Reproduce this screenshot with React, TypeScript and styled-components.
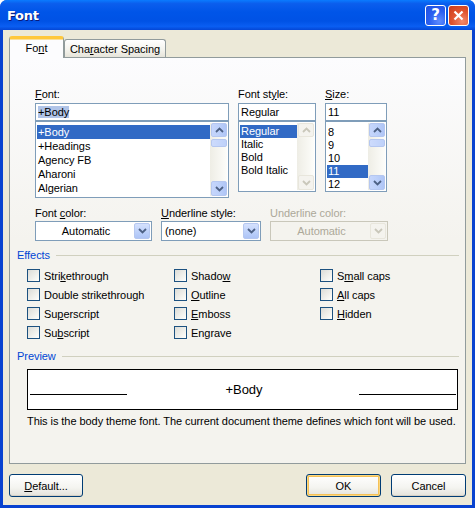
import React, { FC, ReactNode } from "react";
import styled, { createGlobalStyle, css } from "styled-components";

const GlobalStyle = createGlobalStyle`
  html, body { margin: 0; padding: 0; background: #ffffff; }
  body { font-family: "Liberation Sans", Arial, sans-serif; font-size: 11px; color: #000; letter-spacing: -0.06px; }
`;

const UI = `"Liberation Sans", Arial, sans-serif`;

const Window = styled.div`
  width: 475px;
  height: 508px;
  box-sizing: border-box;
  display: flex;
  flex-direction: column;
  background: #0842d0;
  border-radius: 7px 7px 0 0;
  overflow: hidden;
`;

const TitleBar = styled.div`
  height: 30px;
  flex: none;
  display: flex;
  align-items: center;
  padding: 0 6px 0 7px;
  background: linear-gradient(
    to bottom,
    #0a7bff 0%,
    #0b5eed 12%,
    #0055e8 40%,
    #0052e5 70%,
    #0a5ef2 88%,
    #0447d6 100%
  );
`;

const Title = styled.div`
  flex: 1;
  font-family: "DejaVu Sans", ${UI};
  font-weight: bold;
  font-size: 13px;
  letter-spacing: -0.3px;
  color: #fff;
  text-shadow: 1px 1px 0 #0a1a7a;
  padding-top: 1px;
`;

const CaptionButton = styled.div<{ $kind: "help" | "close" }>`
  width: 21px;
  height: 21px;
  box-sizing: border-box;
  border: 1px solid #fff;
  border-radius: 3px;
  margin-left: 2px;
  display: flex;
  align-items: center;
  justify-content: center;
  color: #fff;
  font-family: "DejaVu Sans", ${UI};
  font-weight: bold;
  font-size: 15px;
  ${(p) =>
    p.$kind === "help"
      ? css`
          background: radial-gradient(circle at 70% 80%, #5f8cff 0%, #2a5ff0 50%, #1f4fe0 100%);
        `
      : css`
          background: radial-gradient(circle at 70% 80%, #f28a6c 0%, #e0542f 50%, #c83a1a 100%);
        `}
`;

const Body = styled.div`
  flex: 1;
  margin: 0 3px 3px 3px;
  background: #ece9d8;
  display: flex;
  flex-direction: column;
  padding: 6px 6px 0 6px;
`;

const TabStrip = styled.div`
  display: flex;
  align-items: flex-end;
  height: 21px;
  position: relative;
  z-index: 1;
`;

const Tab = styled.div<{ $active?: boolean }>`
  box-sizing: border-box;
  display: flex;
  align-items: center;
  justify-content: center;
  font-family: ${UI};
  font-size: 11px;
  border: 1px solid #919b9c;
  border-bottom: none;
  border-radius: 3px 3px 0 0;
  ${(p) =>
    p.$active
      ? css`
          width: 55px;
          height: 22px;
          margin-bottom: -1px;
          background: #fcfcfe;
          border-top: 3px solid #ffc83c;
          box-shadow: inset 0 1px 0 #fbe09a;
          padding-bottom: 2px;
        `
      : css`
          width: 102px;
          height: 18px;
          background: linear-gradient(to bottom, #ffffff, #f3f2ec 60%, #e6e4da);
        `}
`;

const Panel = styled.div`
  height: 407px;
  box-sizing: border-box;
  border: 1px solid #919b9c;
  background: linear-gradient(to bottom, #fcfcfe 0%, #f4f3ee 45%, #f4f3ee 100%);
  padding: 0 7px;
  display: flex;
  flex-direction: column;
`;

const FontRow = styled.div`
  display: flex;
  gap: 9px;
  margin: 30px 0 0 18px;
`;

const Field = styled.div<{ $w: number }>`
  width: ${(p) => p.$w}px;
  display: flex;
  flex-direction: column;
`;

const Label = styled.div<{ $disabled?: boolean }>`
  font-family: ${UI};
  font-size: 11px;
  line-height: 13px;
  height: 13px;
  white-space: nowrap;
  color: ${(p) => (p.$disabled ? "#aca899" : "#000")};
`;

const TextBox = styled.div`
  margin-top: 2px;
  height: 18px;
  box-sizing: border-box;
  border: 1px solid #7f9db9;
  background: #fff;
  font-size: 11px;
  line-height: 16px;
  padding-left: 2px;
`;

const Sel = styled.span`
  background: #b0c4e8;
`;

const ListBox = styled.div<{ $h: number }>`
  height: ${(p) => p.$h}px;
  box-sizing: border-box;
  border: 1px solid #7f9db9;
  background: #fff;
  display: flex;
  padding: 1px;
`;

const Items = styled.div<{ $pad: number }>`
  flex: 1;
  padding-top: ${(p) => p.$pad}px;
  overflow: hidden;
`;

const Item = styled.div<{ $selected?: boolean; $h: number }>`
  height: ${(p) => p.$h}px;
  line-height: ${(p) => p.$h}px;
  padding-left: 1px;
  font-size: 11px;
  white-space: nowrap;
  background: ${(p) => (p.$selected ? "#316ac5" : "transparent")};
  color: ${(p) => (p.$selected ? "#fff" : "#000")};
`;

const ScrollBar = styled.div`
  width: 17px;
  display: flex;
  flex-direction: column;
  background: linear-gradient(to right, #eeede5, #fdfdfa);
`;

const ScrollBtn = styled.div<{ $disabled?: boolean; $h?: number }>`
  height: ${(p) => p.$h ?? 15}px;
  box-sizing: border-box;
  margin: 0 0 0 1px;
  border-radius: 2px;
  display: flex;
  align-items: center;
  justify-content: center;
  ${(p) =>
    p.$disabled
      ? css`
          border: 1px solid #e8e6dc;
          background: #f4f3ee;
        `
      : css`
          border: 1px solid #b5c7f0;
          background: linear-gradient(to right, #c6d6fc, #bcd0fa 50%, #afc5f6);
        `}
`;

const Spacer = styled.div<{ $h?: number }>`
  height: ${(p) => p.$h ?? 0}px;
  flex: ${(p) => (p.$h === undefined ? 1 : "none")};
`;

const ComboRow = styled.div`
  display: flex;
  gap: 9px;
  margin: 9px 0 0 18px;
`;

const Combo = styled.div<{ $disabled?: boolean }>`
  margin-top: 1px;
  height: 20px;
  box-sizing: border-box;
  border: 1px solid ${(p) => (p.$disabled ? "#c9c7ba" : "#7f9db9")};
  background: ${(p) => (p.$disabled ? "#f4f3ee" : "#fff")};
  color: ${(p) => (p.$disabled ? "#aca899" : "#000")};
  display: flex;
  align-items: stretch;
  font-size: 11px;
`;

const ComboText = styled.div<{ $center?: boolean }>`
  flex: 1;
  line-height: 18px;
  padding-left: 3px;
  text-align: ${(p) => (p.$center ? "center" : "left")};
`;

const ComboBtn = styled.div<{ $disabled?: boolean }>`
  width: 16px;
  margin: 1px;
  box-sizing: border-box;
  border-radius: 2px;
  display: flex;
  align-items: center;
  justify-content: center;
  ${(p) =>
    p.$disabled
      ? css`
          border: 1px solid #e8e6dc;
          background: #f4f3ee;
        `
      : css`
          border: 1px solid #b5c7f0;
          background: linear-gradient(to bottom, #d5e1fd, #bcd0fa 60%, #aec4f6);
        `}
`;

const GroupHeader = styled.div<{ $mt: number }>`
  display: flex;
  align-items: center;
  gap: 6px;
  margin-top: ${(p) => p.$mt}px;
  height: 13px;
  margin-right: -1px;
`;

const GroupTitle = styled.div`
  color: #0046d5;
  font-size: 11px;
  line-height: 13px;
`;

const GroupLine = styled.div`
  flex: 1;
  height: 1px;
  background: #d0d0bf;
`;

const Effects = styled.div`
  display: grid;
  grid-template-columns: 147px 146px 1fr;
  grid-auto-rows: 19px;
  margin: 4px 0 0 10px;
`;

const CheckRow = styled.div`
  display: flex;
  align-items: center;
  gap: 4px;
  font-size: 11px;
  white-space: nowrap;
`;

const CheckBox = styled.div`
  width: 13px;
  height: 13px;
  box-sizing: border-box;
  border: 1px solid #1c5180;
  background: linear-gradient(135deg, #dcdcd7, #f8f8f4 80%, #ffffff);
  flex: none;
`;

const PreviewBox = styled.div`
  margin: 6px 0 0 10px;
  width: 431px;
  height: 41px;
  box-sizing: border-box;
  border: 1px solid #000;
  background: #fff;
  display: flex;
  align-items: center;
  padding: 0 1px 0 2px;
`;

const PreviewLine = styled.div`
  width: 97px;
  height: 1px;
  background: #000;
  margin-top: 9px;
`;

const PreviewText = styled.div`
  flex: 1;
  text-align: center;
  font-family: ${UI};
  font-size: 13px;
  padding-left: 2px;
`;

const Note = styled.div`
  margin: 5px 0 0 10px;
  font-size: 11px;
  line-height: 13px;
  white-space: nowrap;
`;

const Footer = styled.div`
  display: flex;
  margin-top: 10px;
  gap: 10px;
`;

const Button = styled.div<{ $default?: boolean; $w: number }>`
  width: ${(p) => p.$w}px;
  height: 23px;
  box-sizing: border-box;
  border: 1px solid #003c74;
  border-radius: 3px;
  display: flex;
  align-items: center;
  justify-content: center;
  font-size: 11px;
  background: linear-gradient(to bottom, #ffffff, #f4f4f0 60%, #e3e2da);
  box-shadow: ${(p) =>
    p.$default
      ? "inset 0 0 0 1px #fbd780, inset 0 0 0 2px #f5c157"
      : "inset 0 -1px 0 #d6d0c5"};
`;

const U = styled.span`
  text-decoration: underline;
`;

const Chevron: FC<{ dir: "up" | "down"; disabled?: boolean }> = ({ dir, disabled }) => (
  <svg width="9" height="6" viewBox="0 0 9 6">
    <path
      d={dir === "up" ? "M1 5 L4.5 1.5 L8 5" : "M1 1 L4.5 4.5 L8 1"}
      fill="none"
      stroke={disabled ? "#c9c7ba" : "#4d6185"}
      strokeWidth="1.8"
    />
  </svg>
);

const Thumb = styled.div`
  height: 8px;
  margin: 2px 0 0 1px;
  box-sizing: border-box;
  border: 1px solid #b5c7f0;
  border-radius: 2px;
  background: linear-gradient(to right, #cddbfc, #bed1fa);
`;

const Scroll: FC<{ disabled?: boolean; thumb?: boolean }> = ({ disabled, thumb }) => (
  <ScrollBar>
    <ScrollBtn $disabled={disabled} $h={14}>
      <Chevron dir="up" disabled={disabled} />
    </ScrollBtn>
    {thumb && <Thumb />}
    <Spacer />
    <ScrollBtn $disabled={disabled} $h={15}>
      <Chevron dir="down" disabled={disabled} />
    </ScrollBtn>
  </ScrollBar>
);

const List: FC<{ items: string[]; selected: number; h: number; rowH: number; pad: number; disabled?: boolean }> = ({
  items,
  selected,
  h,
  rowH,
  pad,
  disabled
}) => (
  <ListBox $h={h}>
    <Items $pad={pad}>
      {items.map((it, i) => (
        <Item key={it} $h={rowH} $selected={i === selected}>
          {it}
        </Item>
      ))}
    </Items>
    <Scroll disabled={disabled} thumb={!disabled} />
  </ListBox>
);

const DropDown: FC<{ text: string; center?: boolean; disabled?: boolean }> = ({ text, center, disabled }) => (
  <Combo $disabled={disabled}>
    <ComboText $center={center}>{text}</ComboText>
    <ComboBtn $disabled={disabled}>
      <Chevron dir="down" disabled={disabled} />
    </ComboBtn>
  </Combo>
);

const Check: FC<{ children: ReactNode }> = ({ children }) => (
  <CheckRow>
    <CheckBox />
    <span>{children}</span>
  </CheckRow>
);

const App: FC = () => (
  <>
    <GlobalStyle />
    <Window>
      <TitleBar>
        <Title>Font</Title>
        <CaptionButton $kind="help">?</CaptionButton>
        <CaptionButton $kind="close">
          <svg width="11" height="11" viewBox="0 0 11 11">
            <path d="M1.5 1.5 L9.5 9.5 M9.5 1.5 L1.5 9.5" stroke="#fff" strokeWidth="2.2" />
          </svg>
        </CaptionButton>
      </TitleBar>
      <Body>
        <TabStrip>
          <Tab $active>
            Fo<U>n</U>t
          </Tab>
          <Tab>
            Cha<U>r</U>acter Spacing
          </Tab>
        </TabStrip>
        <Panel>
          <FontRow>
            <Field $w={194}>
              <Label>
                <U>F</U>ont:
              </Label>
              <TextBox>
                <Sel>+Body</Sel>
              </TextBox>
              <List
                items={["+Body", "+Headings", "Agency FB", "Aharoni", "Algerian"]}
                selected={0}
                h={77}
                rowH={14}
                pad={2}
              />
            </Field>
            <Field $w={78}>
              <Label>
                Font st<U>y</U>le:
              </Label>
              <TextBox>Regular</TextBox>
              <List items={["Regular", "Italic", "Bold", "Bold Italic"]} selected={0} h={71} rowH={13} pad={2} disabled />
            </Field>
            <Field $w={62}>
              <Label>
                <U>S</U>ize:
              </Label>
              <TextBox>11</TextBox>
              <List items={["8", "9", "10", "11", "12"]} selected={3} h={71} rowH={13} pad={3} />
            </Field>
          </FontRow>
          <ComboRow>
            <Field $w={117}>
              <Label>
                Font <U>c</U>olor:
              </Label>
              <DropDown text="Automatic" center />
            </Field>
            <Field $w={100}>
              <Label>
                <U>U</U>nderline style:
              </Label>
              <DropDown text="(none)" />
            </Field>
            <Field $w={118}>
              <Label $disabled>Underline color:</Label>
              <DropDown text="Automatic" center disabled />
            </Field>
          </ComboRow>
          <GroupHeader $mt={8}>
            <GroupTitle>Effects</GroupTitle>
            <GroupLine />
          </GroupHeader>
          <Effects>
            <Check>
              Stri<U>k</U>ethrough
            </Check>
            <Check>
              Shado<U>w</U>
            </Check>
            <Check>
              S<U>m</U>all caps
            </Check>
            <Check>Double strikethrough</Check>
            <Check>
              <U>O</U>utline
            </Check>
            <Check>
              <U>A</U>ll caps
            </Check>
            <Check>
              Su<U>p</U>erscript
            </Check>
            <Check>
              <U>E</U>mboss
            </Check>
            <Check>
              <U>H</U>idden
            </Check>
            <Check>
              Su<U>b</U>script
            </Check>
            <Check>Engrave</Check>
          </Effects>
          <GroupHeader $mt={8}>
            <GroupTitle>Preview</GroupTitle>
            <GroupLine />
          </GroupHeader>
          <PreviewBox>
            <PreviewLine />
            <PreviewText>+Body</PreviewText>
            <PreviewLine />
          </PreviewBox>
          <Note>This is the body theme font. The current document theme defines which font will be used.</Note>
        </Panel>
        <Footer>
          <Button $w={74}>
            <U>D</U>efault...
          </Button>
          <Spacer />
          <Button $w={75} $default>
            OK
          </Button>
          <Button $w={75}>Cancel</Button>
        </Footer>
      </Body>
    </Window>
  </>
);

export default App;
